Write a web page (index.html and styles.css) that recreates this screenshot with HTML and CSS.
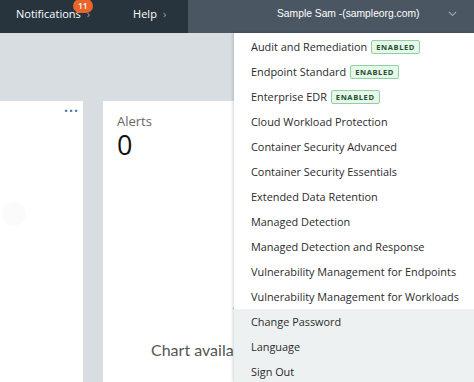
FILE: index.html
```html
<!DOCTYPE html>
<html>
<head>
<meta charset="utf-8">
<link rel="stylesheet" href="styles.css">
</head>
<body>
<header class="topbar">
  <div class="nav-left">
    <div class="nav-item notif">Notifications<span class="count">11</span><span class="chev">›</span></div>
    <div class="nav-item help">Help<span class="chev">›</span></div>
  </div>
  <div class="nav-right">
    <span class="user">Sample Sam -(sampleorg.com)</span>
    <svg class="caret" width="9" height="6" viewBox="0 0 9 6"><path d="M1 1l3.5 3.5L8 1" fill="none" stroke="#9aa3ad" stroke-width="1.2"/></svg>
  </div>
</header>
<main class="content">
  <div class="cards">
    <section class="card left-card">
      <div class="dots">···</div>
      <div class="ghost"></div>
    </section>
    <section class="card alerts-card">
      <div class="card-title">Alerts</div>
      <div class="card-value">0</div>
      <svg class="arc" width="120" height="60" viewBox="0 0 120 60"><path d="M3 43 Q40 2 118 0" fill="none" stroke="#c9cdd1" stroke-width="1.2" stroke-dasharray="2 3"/></svg>
      <div class="chart-msg">Chart available</div>
    </section>
  </div>
</main>
<div class="menu">
  <div class="menu-section">
    <div class="menu-item">Audit and Remediation <span class="badge">ENABLED</span></div>
    <div class="menu-item">Endpoint Standard <span class="badge">ENABLED</span></div>
    <div class="menu-item">Enterprise EDR <span class="badge">ENABLED</span></div>
    <div class="menu-item">Cloud Workload Protection</div>
    <div class="menu-item">Container Security Advanced</div>
    <div class="menu-item">Container Security Essentials</div>
    <div class="menu-item">Extended Data Retention</div>
    <div class="menu-item">Managed Detection</div>
    <div class="menu-item">Managed Detection and Response</div>
    <div class="menu-item">Vulnerability Management for Endpoints</div>
    <div class="menu-item">Vulnerability Management for Workloads</div>
  </div>
  <div class="menu-section alt">
    <div class="menu-item">Change Password</div>
    <div class="menu-item">Language</div>
    <div class="menu-item">Sign Out</div>
  </div>
</div>
</body>
</html>
```
FILE: styles.css
```css
html, body {
  margin: 0;
  padding: 0;
  width: 474px;
  height: 382px;
  overflow: hidden;
  background: #d8dde1;
  font-family: "Open Sans", "Liberation Sans", sans-serif;
}
.topbar {
  display: flex;
  height: 33px;
}
.nav-left {
  width: 188px;
  background: #27343d;
  display: flex;
  align-items: center;
  padding-bottom: 6px;
  box-sizing: border-box;
  color: #fff;
  font-size: 11px;
}
.nav-item {
  position: relative;
  display: flex;
  align-items: center;
}
.notif { margin-left: 16px; }
.help { margin-left: 43px; }
.chev {
  color: #9aa3ab;
  font-size: 11px;
  margin-left: 6px;
}
.count {
  position: absolute;
  left: 57px;
  top: -7px;
  background: #e8652b;
  color: #fff;
  font-size: 8.5px;
  font-weight: 600;
  height: 14px;
  line-height: 14px;
  padding: 0 5px;
  border-radius: 7px;
}
.nav-right {
  flex: 1;
  background: #4b5663;
  display: flex;
  align-items: center;
  padding-bottom: 6px;
  box-sizing: border-box;
  color: #fff;
  font-family: "Liberation Sans", Arial, sans-serif;
  font-size: 10.3px;
  white-space: nowrap;
}
.user { margin-left: 89px; }
.caret { margin-left: 29px; }
.content {
  padding-top: 68px;
}
.cards {
  display: flex;
  gap: 20px;
}
.card {
  background: #fff;
  height: 281px;
  position: relative;
}
.left-card {
  width: 83px;
}
.dots {
  position: absolute;
  right: 4px;
  top: 2px;
  color: #4a78b0;
  font-size: 14px;
  font-weight: 700;
  letter-spacing: 1px;
  line-height: 16px;
}
.ghost {
  position: absolute;
  left: 2px;
  top: 101px;
  width: 24px;
  height: 24px;
  border-radius: 50%;
  background: #fbfbfb;
}
.alerts-card {
  width: 200px;
  padding-left: 14px;
  box-sizing: border-box;
}
.card-title {
  margin-top: 12px;
  color: #666;
  font-size: 13px;
  line-height: 16px;
}
.card-value {
  margin-top: 2px;
  color: #111;
  font-size: 27px;
  line-height: 28px;
  font-weight: 400;
}
.arc {
  position: absolute;
  left: 127px;
  top: 165px;
}
.chart-msg {
  position: absolute;
  left: 48px;
  top: 239px;
  font-family: "Lato", "Open Sans", sans-serif;
  color: #555;
  font-size: 16px;
  white-space: nowrap;
}
.menu {
  position: absolute;
  top: 33px;
  left: 234px;
  width: 240px;
  height: 349px;
  background: #fff;
  box-shadow: -1px 0 3px rgba(0,0,0,0.18);
  padding-top: 1px;
  box-sizing: border-box;
}
.menu-section.alt {
  background: #eef1f2;
  height: 80px;
}
.menu-item {
  height: 25px;
  display: flex;
  align-items: center;
  padding-left: 17px;
  font-size: 10.9px;
  color: #2b2b2b;
  white-space: nowrap;
}
.badge {
  margin-left: 4px;
  border: 1px solid #8fd19e;
  background: #e7f6ea;
  color: #21522c;
  font-size: 7.5px;
  font-weight: 700;
  letter-spacing: 0.6px;
  height: 12px;
  line-height: 12px;
  padding: 0 4px;
  border-radius: 2px;
}
```
